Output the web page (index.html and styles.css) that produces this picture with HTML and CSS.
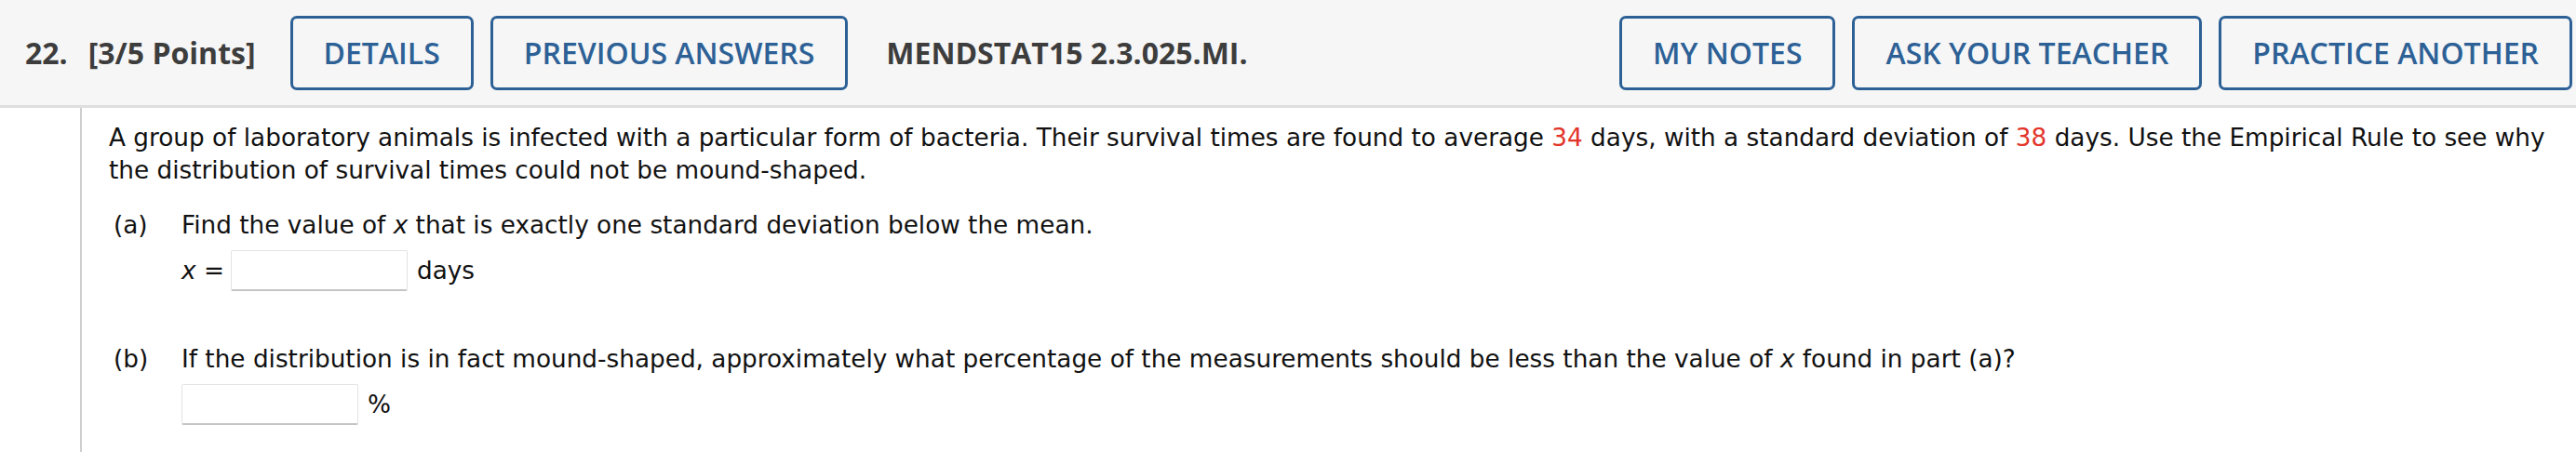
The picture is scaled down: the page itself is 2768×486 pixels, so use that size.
FILE: index.html
```html
<!DOCTYPE html>
<html>
<head>
<meta charset="utf-8">
<link rel="stylesheet" href="styles.css">
</head>
<body>
<div class="header">
  <span class="qnum">22.</span>
  <span class="points">[3/5 Points]</span>
  <div class="btn btn-first">DETAILS</div>
  <div class="btn">PREVIOUS ANSWERS</div>
  <span class="qid">MENDSTAT15 2.3.025.MI.</span>
  <div class="spacer"></div>
  <div class="btn">MY NOTES</div>
  <div class="btn">ASK YOUR TEACHER</div>
  <div class="btn">PRACTICE ANOTHER</div>
</div>
<div class="content">
  <p class="stem">A group of laboratory animals is infected with a particular form of bacteria. Their survival times are found to average <span class="red">34</span> days, with a standard deviation of <span class="red">38</span> days. Use the Empirical Rule to see why the distribution of survival times could not be mound-shaped.</p>
  <div class="part part-a">
    <div class="part-q"><span class="label">(a)</span><span>Find the value of <i>x</i> that is exactly one standard deviation below the mean.</span></div>
    <div class="answer"><span class="var"><i>x</i> =</span><span class="input"></span><span>days</span></div>
  </div>
  <div class="part part-b">
    <div class="part-q"><span class="label">(b)</span><span>If the distribution is in fact mound-shaped, approximately what percentage of the measurements should be less than the value of <i>x</i> found in part (a)?</span></div>
    <div class="answer"><span class="input"></span><span>%</span></div>
  </div>
</div>
</body>
</html>
```
FILE: styles.css
```css
html, body {
  margin: 0;
  padding: 0;
  background: #fff;
}
body {
  width: 2768px;
  height: 486px;
  overflow: hidden;
}
.header {
  display: flex;
  align-items: center;
  height: 113px;
  background: #f6f6f6;
  border-bottom: 3px solid #dedede;
  padding: 0 4px 0 27px;
  font-family: "Open Sans", sans-serif;
}
.qnum {
  font-size: 32px;
  font-weight: 700;
  color: #3d3d3d;
  margin-right: 22px;
}
.points {
  font-size: 32px;
  font-weight: 700;
  color: #3d3d3d;
  margin-right: 37px;
}
.btn {
  box-sizing: border-box;
  height: 80px;
  display: flex;
  align-items: center;
  padding: 0 33px;
  border: 3px solid #2d6196;
  border-radius: 7px;
  color: #2d6196;
  font-size: 32px;
  font-weight: 600;
  margin-right: 18px;
  white-space: nowrap;
}
.btn:last-child {
  margin-right: 0;
}
.qid {
  margin-left: 23px;
  font-size: 32px;
  font-weight: 700;
  color: #3d3d3d;
}
.spacer {
  flex: 1;
}
.content {
  margin-left: 86px;
  border-left: 2px solid #cfcfcf;
  padding: 15px 30px 0 29px;
  height: 355px;
  font-family: "DejaVu Sans", Verdana, sans-serif;
  font-size: 26.3px;
  line-height: 35px;
  color: #111;
}
.stem {
  margin: 0;
}
.red {
  color: #e3342a;
}
.part {
  padding-left: 5px;
}
.part-a {
  margin-top: 24px;
}
.part-b {
  margin-top: 56px;
}
.part-q {
  display: flex;
}
.label {
  width: 73px;
  flex: none;
}
.answer {
  display: flex;
  align-items: center;
  margin-top: 9px;
  padding-left: 73px;
}
.var {
  margin-right: 7px;
}
.input {
  box-sizing: border-box;
  width: 190px;
  height: 44px;
  border: 1px solid #e3e3e3;
  border-bottom: 2px solid #c4c4c4;
  border-radius: 2px;
  background: #fff;
  margin-right: 10px;
}
i {
  font-style: italic;
}
```
